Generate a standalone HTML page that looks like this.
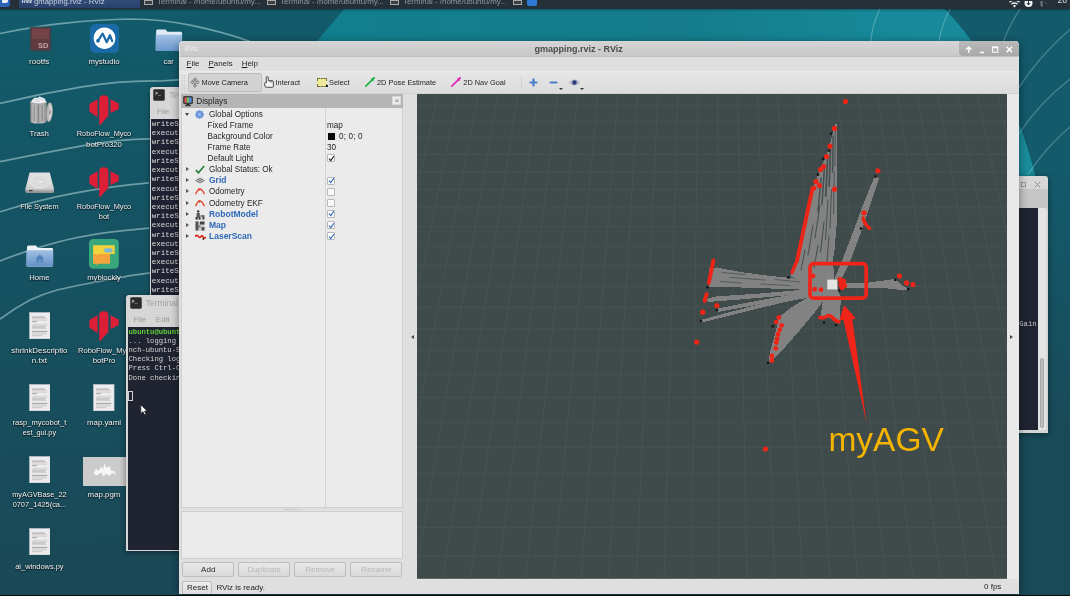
<!DOCTYPE html>
<html>
<head>
<meta charset="utf-8">
<title>gmapping.rviz - RViz</title>
<style>
*{box-sizing:border-box;margin:0;padding:0}
html,body{width:1070px;height:596px;overflow:hidden;background:#1a4856}
body{font-family:"Liberation Sans",sans-serif;position:relative;color:#222;filter:blur(.45px)}
.abs{position:absolute}
#bg{position:absolute;left:0;top:0;width:1070px;height:596px}
#panel{position:absolute;left:0;top:0;width:1070px;height:8.5px;background:#252f37;overflow:hidden;box-shadow:0 1px 2px rgba(0,0,0,.35)}
.tk{position:absolute;top:-2.8px;font-size:7.9px;line-height:9px;color:#8f979e;white-space:nowrap}
.ico{position:absolute;width:70px;text-align:center;font-size:8.2px;line-height:11px;color:#f1f3f4;text-shadow:0 1px 1px rgba(0,0,0,.75),0 0 2px rgba(0,0,0,.5)}
.ico svg{display:block;margin:0 auto}
/* rviz */
#rviz{position:absolute;left:179.3px;top:40.7px;width:839.8px;height:553.8px;background:#dfdfdf;border-radius:4px 4px 0 0;box-shadow:0 2px 10px rgba(0,0,0,.45);overflow:hidden}
#rtitle{position:absolute;left:0;top:0;width:100%;height:16.5px;background:linear-gradient(#d5d5d5,#c8c8c8);border-bottom:1px solid #bdbdbd}
#rtitle .t{position:absolute;left:354.6px;top:3.2px;white-space:nowrap;font-size:9px;line-height:11px;font-weight:bold;color:#4c4c4c}
#menu{position:absolute;left:0;top:16.5px;width:100%;height:13.5px;background:#dfdfdf;font-size:7.9px;color:#1e1e1e}
#menu span{position:absolute;top:1.6px}
#tool{position:absolute;left:0;top:30px;width:100%;height:23px;background:linear-gradient(#e6e6e6,#dcdcdc);border-top:1px solid #ebebeb;border-bottom:1px solid #d2d2d2;font-size:7.4px;color:#1e1e1e}
#tool .tb{position:absolute;top:6.4px;white-space:nowrap}
.row{position:absolute;left:0;height:11px;font-size:8.15px;line-height:11px;white-space:nowrap;color:#1f1f1f}
.row.b{font-weight:bold;color:#2f6ab8;font-size:8.5px}
.val{position:absolute;left:147px;font-size:8.15px;line-height:11px;height:11px;color:#1f1f1f}
.cb{position:absolute;left:147.2px;width:8px;height:8px;border:1px solid #b9b9b9;background:#fafafa;border-radius:1px}
.tri{position:absolute;left:6px;width:0;height:0;border-left:3px solid #555;border-top:2.5px solid transparent;border-bottom:2.5px solid transparent}
.btn{position:absolute;top:521px;height:15px;border:1px solid #bebebe;border-radius:2px;background:linear-gradient(#e9e9e9,#d9d9d9);font-size:8px;line-height:13px;text-align:center;color:#b5b5b5}
</style>
</head>
<body>
<!-- WALLPAPER -->
<svg id="bg" viewBox="0 0 1070 596">
<defs>
<linearGradient id="g0" x1="0" y1="0" x2="0.12" y2="1"><stop offset="0" stop-color="#115c6b"/><stop offset=".38" stop-color="#155363"/><stop offset="1" stop-color="#1a4856"/></linearGradient>
<linearGradient id="g1" x1="0" y1="0" x2="1" y2="0"><stop offset="0" stop-color="#127f8e"/><stop offset=".5" stop-color="#147c8c"/><stop offset=".8" stop-color="#17899a"/><stop offset="1" stop-color="#1a8d9d"/></linearGradient>
</defs>
<rect width="1070" height="596" fill="url(#g0)"/>
<path d="M352 0 L945 0 L945 9 Q985 50 1018.4 121.6 Q1029 148 1037 182 L1037 300 L1010 300 L1010 41 L317 41Z" fill="url(#g1)"/>
<path d="M945 0 L1070 0 L1070 596 L1010 596 L1010 300 L1037 300 L1037 182 Q1029 148 1018.4 121.6 Q985 50 945 9Z" fill="#135a6b"/>
<path d="M1010 300 L1070 250 L1070 596 L1010 596Z" fill="#16536a" opacity=".0"/>
<rect x="1010" y="420" width="60" height="176" fill="#194a58"/>
<linearGradient id="g2" x1="0" y1="0" x2="0" y2="1"><stop offset="0" stop-color="#135a6b"/><stop offset="1" stop-color="#194a58"/></linearGradient>
<rect x="1047" y="170" width="23" height="260" fill="url(#g2)"/>
<g fill="none" stroke="#c4e6e8" stroke-opacity=".5" stroke-width="1.7">
<path d="M0 33.5 Q35 26 68 22.8 Q100 19.4 130 19 Q165 19.5 190 25.2 Q220 31 250 41.5"/>
<path d="M0 103.3 Q40 94 80.5 87.2 T160 81 L182 79.6"/>
<path d="M0 161.6 Q40 153.5 80.5 146.1 T151 138.9"/>
<path d="M0 211.8 Q38 200 75.7 192.9 T149 182.8"/>
<path d="M0 261 Q30 249 63 240.8 T149 228.2"/>
<path d="M0 319 Q15 308 30 300 Q43 294 57 290 Q76 285.5 96.4 282 T130 275.7 L152 272.6"/>
</g>
<g fill="none" stroke="#bfe3e6" stroke-opacity=".33" stroke-width="1.2">
<path d="M1003.5 41 Q1010 24 1020 9"/>
<path d="M1018.4 88.4 Q1040 55 1070 29.5"/>
<path d="M1018.4 134.5 Q1040 102 1070 79.2"/>
<path d="M1027.6 175 Q1046 147 1070 127"/>
<path d="M939 41 Q942 24 950 9"/>
<path d="M871 41 Q872 25 880 9"/>
</g>
</svg>

<!-- TOP PANEL -->
<div id="panel">
 <div class="abs" style="left:-2px;top:-3px;width:12px;height:9.5px;background:#2a62b8;border-radius:3px"></div><div class="abs" style="left:2px;top:-1px;width:5.5px;height:4px;background:#eef2f8;border-radius:1px 2px 2px 1px"></div>
 <div class="abs" style="left:18.5px;top:0;width:121.5px;height:7.9px;background:linear-gradient(#314d79,#29406a)"></div>
 <div class="tk" style="left:34px;color:#c9d2dd;font-size:7.7px">gmapping.rviz - RViz</div><div class="abs" style="left:21.8px;top:-2.2px;font-size:5.4px;font-weight:bold;line-height:6px;color:#dfe5ee;letter-spacing:-.4px">RViz</div>
 <div class="tk" style="left:157px">Terminal - /home/ubuntu/my...</div>
 <div class="tk" style="left:280px">Terminal - /home/ubuntu/my...</div>
 <div class="tk" style="left:403px">Terminal - /home/ubuntu/my...</div>
 <div class="abs" style="left:144px;top:0;width:9px;height:5px;background:#3a3f44;border:1px solid #aaa"></div>
 <div class="abs" style="left:267px;top:0;width:9px;height:5px;background:#3a3f44;border:1px solid #aaa"></div>
 <div class="abs" style="left:390px;top:0;width:9px;height:5px;background:#3a3f44;border:1px solid #aaa"></div>
 <div class="abs" style="left:513px;top:0;width:9px;height:5px;background:#3a3f44;border:1px solid #aaa"></div><div class="abs" style="left:527px;top:0;width:10px;height:6px;background:#2d7bd6;border-radius:0 0 2px 2px"></div>
 <svg class="abs" style="left:1007.8px;top:.5px" width="44" height="9" viewBox="0 0 44 9"><g fill="none" stroke="#e8e8e8" stroke-width="1.3"><path d="M1.5 1.2Q6.5 -2.6 11.5 1.2"/><path d="M3.4 3.2Q6.5 .8 9.6 3.2"/></g><circle cx="6.5" cy="5" r="1.2" fill="#e8e8e8"/><circle cx="20.5" cy="2" r="4" fill="#f2f2f2"/><path d="M20.5 -.5V3.6M18.8 2L20.5 4 22.2 2" stroke="#1d2a33" stroke-width="1" fill="none"/><path d="M32.5 0V5L34.8 6V-1Z" fill="#69727a"/><path d="M37 1L39 3.5" stroke="#69727a" stroke-width=".8"/></svg>
<div class="tk" style="left:1057.6px;top:-3.9px;font-size:8.6px;color:#d8d8d8">28 S</div>
</div>

<!-- DESKTOP ICONS -->
<div id="icons"><svg class="abs" style="left:28.5px;top:25.5px" width="23" height="26" viewBox="0 0 23 26"><rect x=".5" y=".5" width="22" height="25" rx="1.8" fill="#2f4852" opacity=".85"/><rect x="1.8" y="1.8" width="19.4" height="22.4" rx="1" fill="#5f3b41"/><rect x="3" y="3" width="17" height="10" fill="#744349"/><text x="14.2" y="22.3" font-family="Liberation Sans,sans-serif" font-size="7.4" font-weight="bold" fill="#c4a3a8" text-anchor="middle">SD</text></svg>
<div class="ico" style="left:-5.799999999999997px;top:56.3px;width:90px;font-size:8.08px">rootfs</div>
<svg class="abs" style="left:89.5px;top:24px" width="29" height="29" viewBox="0 0 29 29"><rect width="29" height="29" rx="5" fill="#1a6aa8"/><circle cx="14.5" cy="14.2" r="10.8" fill="#fff"/><path d="M8.2 16.4L12.7 9.6 16.7 18.2 19.9 11.2 22.2 17.2" fill="none" stroke="#1a6aa8" stroke-width="2.2" stroke-linejoin="round" stroke-linecap="round"/><circle cx="8" cy="16.8" r="1.9" fill="#1a6aa8"/></svg>
<div class="ico" style="left:59px;top:56.3px;width:90px;font-size:7.75px">mystudio</div>
<svg class="abs" style="left:154.8px;top:28.6px" width="27.8" height="22.6" viewBox="0 0 29 24"><defs><linearGradient id="fo" x1="0" y1="0" x2="0" y2="1"><stop offset="0" stop-color="#a3c2e6"/><stop offset="1" stop-color="#6b98cd"/></linearGradient></defs><path d="M1 2Q1 .5 2.5 .5H11L13 3H27Q28.5 3 28.5 4.5V22Q28.5 23.5 27 23.5H2Q.5 23.5 .5 22Z" fill="#dfe9f5"/><path d="M.5 6H28.5V22Q28.5 23.5 27 23.5H2Q.5 23.5 .5 22Z" fill="url(#fo)"/></svg>
<div class="ico" style="left:123.6px;top:56.3px;width:90px;font-size:7.19px">car</div>
<svg class="abs" style="left:30px;top:96px" width="23" height="29" viewBox="0 0 23 29"><defs><linearGradient id="tr" x1="0" y1="0" x2="1" y2="0"><stop offset="0" stop-color="#8a8a8a"/><stop offset=".22" stop-color="#c6c6c6"/><stop offset=".5" stop-color="#a2a2a2"/><stop offset=".75" stop-color="#bcbcbc"/><stop offset="1" stop-color="#868686"/></linearGradient><linearGradient id="tl" x1="0" y1="0" x2="1" y2="0"><stop offset="0" stop-color="#a4a4a4"/><stop offset=".6" stop-color="#cdcdcd"/><stop offset="1" stop-color="#e2e2e2"/></linearGradient></defs><path d="M.3 5.8H16.7V25.2Q16.7 27.6 8.5 27.6 .3 27.6 .3 25.2Z" fill="url(#tr)"/><g fill="#7f7f7f" opacity=".75"><rect x="3.6" y="9" width="1.3" height="16.5"/><rect x="7.6" y="9.4" width="1.3" height="16.8"/><rect x="11.6" y="9" width="1.3" height="16.5"/></g><ellipse cx="8.5" cy="6" rx="8.3" ry="2.1" fill="#c9c9c9" stroke="#8f8f8f" stroke-width=".6"/><path d="M1.8 6L2.6 3.2 5 1.6 7.4 1.9 9.6 .5 12 1.6 14.4 2.2 15.6 4.4 15.2 6.2Q8.5 8.2 1.8 6Z" fill="#eef1f4"/><path d="M4 4.5L6 2.6 8 4.2 10 2 12 4 14 3M5 5.8L7.5 4.8 10 6" stroke="#b4bbc2" stroke-width=".6" fill="none"/><ellipse cx="19.3" cy="16.2" rx="3.1" ry="9.6" fill="url(#tl)" stroke="#969696" stroke-width=".6" transform="rotate(4 19.3 16.2)"/><ellipse cx="19.9" cy="16.2" rx="1" ry="2.2" fill="#9d9d9d" transform="rotate(4 19.3 16.2)"/></svg>
<div class="ico" style="left:-5.799999999999997px;top:128.2px;width:90px;font-size:7.72px">Trash</div>
<svg class="abs" style="left:89px;top:95px" width="30" height="31" viewBox="0 0 30 31"><path d="M.4 8.9L8.6 4.3V22.2L.4 16.6Z M10.2 4.4Q10.2 .2 14.8 .2 19.4.2 19.4 4.4V20.7L11.6 29.8Q10.2 30.6 10.2 28.6Z M21.5 4.3L29.7 8.4V14L21.5 18.1Z" fill="#dc1f36"/></svg>
<div class="ico" style="left:59px;top:128.2px;width:90px;font-size:7.30px">RoboFlow_Myco</div>
<div class="ico" style="left:59px;top:138.8px;width:90px;font-size:7.77px">botPro320</div>
<svg class="abs" style="left:25px;top:172.4px" width="29.4" height="21.4" viewBox="0 0 29.4 21.4"><defs><linearGradient id="hd" x1="0" y1="0" x2="0" y2="1"><stop offset="0" stop-color="#e2e2e2"/><stop offset="1" stop-color="#d0d0d0"/></linearGradient><linearGradient id="hf2" x1="0" y1="0" x2="0" y2="1"><stop offset="0" stop-color="#bdbdbd"/><stop offset="1" stop-color="#8f8f8f"/></linearGradient></defs><path d="M4.6 .5H24.8L29 16.8H.4Z" fill="url(#hd)"/><path d="M.4 16.8H29V19.6Q29 20.9 27.6 20.9H1.8Q.4 20.9 .4 19.6Z" fill="url(#hf2)"/><ellipse cx="15" cy="9.6" rx="10" ry="6.4" fill="#dcdcdc" stroke="#e9e9e9" stroke-width=".9"/><ellipse cx="15.4" cy="9.8" rx="3.6" ry="2.2" fill="#e6e6e6" stroke="#cacaca" stroke-width=".6"/><rect x="4" y="18" width="3.6" height="1.2" fill="#3f3f3f"/><path d="M.6 16.8H28.8" stroke="#ececec" stroke-width=".7"/></svg>
<div class="ico" style="left:-5.600000000000001px;top:200.8px;width:90px;font-size:7.32px">File System</div>
<svg class="abs" style="left:89px;top:167px" width="30" height="31" viewBox="0 0 30 31"><path d="M.4 8.9L8.6 4.3V22.2L.4 16.6Z M10.2 4.4Q10.2 .2 14.8 .2 19.4.2 19.4 4.4V20.7L11.6 29.8Q10.2 30.6 10.2 28.6Z M21.5 4.3L29.7 8.4V14L21.5 18.1Z" fill="#dc1f36"/></svg>
<div class="ico" style="left:59px;top:200.8px;width:90px;font-size:7.30px">RoboFlow_Myco</div>
<div class="ico" style="left:59px;top:211.4px;width:90px;font-size:7.41px">bot</div>
<svg class="abs" style="left:26px;top:244.6px" width="27.6" height="22.2" viewBox="0 0 27.6 22.2"><defs><linearGradient id="hf" x1="0" y1="0" x2="0" y2="1"><stop offset="0" stop-color="#a2c0e4"/><stop offset="1" stop-color="#6290c6"/></linearGradient></defs><path d="M1 2Q1 .5 2.5 .5H10L12 3H26Q27.1 3 27.1 4.5V20.4Q27.1 21.8 25.6 21.8H2Q.5 21.8 .5 20.4Z" fill="#eef2f7"/><path d="M.5 5.2H27.1V20.4Q27.1 21.8 25.6 21.8H2Q.5 21.8 .5 20.4Z" fill="url(#hf)"/><path d="M13.8 9.6L9.3 13.6H10.8V18H12.8V15H14.8V18H16.8V13.6H18.3Z" fill="#5283bd"/></svg>
<div class="ico" style="left:-5.600000000000001px;top:272.4px;width:90px;font-size:7.64px">Home</div>
<svg class="abs" style="left:89.4px;top:239.1px" width="29.8" height="29.8" viewBox="0 0 29.8 29.8"><rect width="29.8" height="29.8" rx="4.2" fill="#3aa67c"/><path d="M4.1 14.9H21.1V24.7H9.2L7.8 26 6.6 24.7H4.1Z" fill="#f5a43b"/><path d="M4.1 6.2H25.7V14.9H9.2L7.8 16.2 6.6 14.9H4.1Z" fill="#f3d33b"/><rect x="14.9" y="9.2" width="8.7" height="4.2" rx="2.1" fill="#7bb8d6"/></svg>
<div class="ico" style="left:59px;top:272.4px;width:90px;font-size:7.65px">myblockly</div>
<svg class="abs" style="left:28.7px;top:311.5px" width="21.6" height="27.4" viewBox="0 0 22 28"><rect x=".5" y=".5" width="21" height="27" fill="#ececee" stroke="#cfcfd2" stroke-width=".5"/><path d="M3.2 5.2H16.5" stroke="#8d8d8d" stroke-width=".8"/><path d="M3.2 6.8H18.5" stroke="#c9c9c9" stroke-width=".8"/><path d="M3.2 8.3H18.5" stroke="#c4c4c4" stroke-width=".8"/><path d="M3.2 9.9H8" stroke="#8a8a8a" stroke-width=".8"/><path d="M3.2 12.4H18.5" stroke="#cdcdcd" stroke-width=".8"/><path d="M3.2 13.9H18.5" stroke="#c4c4c4" stroke-width=".8"/><path d="M3.2 15.4H17" stroke="#999" stroke-width=".8"/><path d="M3.2 16.9H18" stroke="#c6c6c6" stroke-width=".8"/><path d="M3.2 19.8H18.8" stroke="#8f8f8f" stroke-width=".8"/><path d="M3.2 21.3H18" stroke="#c2c2c2" stroke-width=".8"/><path d="M3.2 22.8H17.5" stroke="#c6c6c6" stroke-width=".8"/><path d="M3.2 24.2H13.5" stroke="#bcbcbc" stroke-width=".8"/></svg>
<div class="ico" style="left:-5.600000000000001px;top:344.5px;width:90px;font-size:7.92px">shrinkDescriptio</div>
<div class="ico" style="left:-5.600000000000001px;top:355.1px;width:90px;font-size:7.99px">n.txt</div>
<svg class="abs" style="left:89px;top:310.5px" width="30" height="31" viewBox="0 0 30 31"><path d="M.4 8.9L8.6 4.3V22.2L.4 16.6Z M10.2 4.4Q10.2 .2 14.8 .2 19.4.2 19.4 4.4V20.7L11.6 29.8Q10.2 30.6 10.2 28.6Z M21.5 4.3L29.7 8.4V14L21.5 18.1Z" fill="#dc1f36"/></svg>
<div class="ico" style="left:59px;top:344.5px;width:90px;font-size:7.56px">RoboFlow_Myc</div>
<div class="ico" style="left:59px;top:355.1px;width:90px;font-size:7.72px">botPro</div>
<svg class="abs" style="left:28.7px;top:384px" width="21.6" height="27.4" viewBox="0 0 22 28"><rect x=".5" y=".5" width="21" height="27" fill="#ececee" stroke="#cfcfd2" stroke-width=".5"/><path d="M3.2 5.2H16.5" stroke="#8d8d8d" stroke-width=".8"/><path d="M3.2 6.8H18.5" stroke="#c9c9c9" stroke-width=".8"/><path d="M3.2 8.3H18.5" stroke="#c4c4c4" stroke-width=".8"/><path d="M3.2 9.9H8" stroke="#8a8a8a" stroke-width=".8"/><path d="M3.2 12.4H18.5" stroke="#cdcdcd" stroke-width=".8"/><path d="M3.2 13.9H18.5" stroke="#c4c4c4" stroke-width=".8"/><path d="M3.2 15.4H17" stroke="#999" stroke-width=".8"/><path d="M3.2 16.9H18" stroke="#c6c6c6" stroke-width=".8"/><path d="M3.2 19.8H18.8" stroke="#8f8f8f" stroke-width=".8"/><path d="M3.2 21.3H18" stroke="#c2c2c2" stroke-width=".8"/><path d="M3.2 22.8H17.5" stroke="#c6c6c6" stroke-width=".8"/><path d="M3.2 24.2H13.5" stroke="#bcbcbc" stroke-width=".8"/></svg>
<div class="ico" style="left:-5.600000000000001px;top:416.7px;width:90px;font-size:7.55px">rasp_mycobot_t</div>
<div class="ico" style="left:-5.600000000000001px;top:427.3px;width:90px;font-size:7.32px">est_gui.py</div>
<svg class="abs" style="left:93.2px;top:384px" width="21.6" height="27.4" viewBox="0 0 22 28"><rect x=".5" y=".5" width="21" height="27" fill="#ececee" stroke="#cfcfd2" stroke-width=".5"/><path d="M3.2 5.2H16.5" stroke="#8d8d8d" stroke-width=".8"/><path d="M3.2 6.8H18.5" stroke="#c9c9c9" stroke-width=".8"/><path d="M3.2 8.3H18.5" stroke="#c4c4c4" stroke-width=".8"/><path d="M3.2 9.9H8" stroke="#8a8a8a" stroke-width=".8"/><path d="M3.2 12.4H18.5" stroke="#cdcdcd" stroke-width=".8"/><path d="M3.2 13.9H18.5" stroke="#c4c4c4" stroke-width=".8"/><path d="M3.2 15.4H17" stroke="#999" stroke-width=".8"/><path d="M3.2 16.9H18" stroke="#c6c6c6" stroke-width=".8"/><path d="M3.2 19.8H18.8" stroke="#8f8f8f" stroke-width=".8"/><path d="M3.2 21.3H18" stroke="#c2c2c2" stroke-width=".8"/><path d="M3.2 22.8H17.5" stroke="#c6c6c6" stroke-width=".8"/><path d="M3.2 24.2H13.5" stroke="#bcbcbc" stroke-width=".8"/></svg>
<div class="ico" style="left:59px;top:416.7px;width:90px;font-size:7.85px">map.yaml</div>
<svg class="abs" style="left:28.7px;top:456px" width="21.6" height="27.4" viewBox="0 0 22 28"><rect x=".5" y=".5" width="21" height="27" fill="#ececee" stroke="#cfcfd2" stroke-width=".5"/><path d="M3.2 5.2H16.5" stroke="#8d8d8d" stroke-width=".8"/><path d="M3.2 6.8H18.5" stroke="#c9c9c9" stroke-width=".8"/><path d="M3.2 8.3H18.5" stroke="#c4c4c4" stroke-width=".8"/><path d="M3.2 9.9H8" stroke="#8a8a8a" stroke-width=".8"/><path d="M3.2 12.4H18.5" stroke="#cdcdcd" stroke-width=".8"/><path d="M3.2 13.9H18.5" stroke="#c4c4c4" stroke-width=".8"/><path d="M3.2 15.4H17" stroke="#999" stroke-width=".8"/><path d="M3.2 16.9H18" stroke="#c6c6c6" stroke-width=".8"/><path d="M3.2 19.8H18.8" stroke="#8f8f8f" stroke-width=".8"/><path d="M3.2 21.3H18" stroke="#c2c2c2" stroke-width=".8"/><path d="M3.2 22.8H17.5" stroke="#c6c6c6" stroke-width=".8"/><path d="M3.2 24.2H13.5" stroke="#bcbcbc" stroke-width=".8"/></svg>
<div class="ico" style="left:-5.600000000000001px;top:488.8px;width:90px;font-size:7.37px">myAGVBase_22</div>
<div class="ico" style="left:-5.600000000000001px;top:499.4px;width:90px;font-size:7.42px">0707_1425(ca...</div>
<svg class="abs" style="left:83px;top:456.5px" width="45" height="29" viewBox="0 0 45 29"><rect width="45" height="29" fill="#cbcbcb"/><path d="M10.5 16.5L13 12 16 13.5 18 9.5 20 12 21.5 6.5 23.5 11 27 9 27.5 13 31.5 14.5 33 17.5 29 16 26.5 19 23 16.5 20.5 19.5 18 15.5 14 18.5Z" fill="#f6f6f6"/></svg>
<div class="ico" style="left:59px;top:488.8px;width:90px;font-size:7.86px">map.pgm</div>
<svg class="abs" style="left:28.7px;top:528px" width="21.6" height="27.4" viewBox="0 0 22 28"><rect x=".5" y=".5" width="21" height="27" fill="#ececee" stroke="#cfcfd2" stroke-width=".5"/><path d="M3.2 5.2H16.5" stroke="#8d8d8d" stroke-width=".8"/><path d="M3.2 6.8H18.5" stroke="#c9c9c9" stroke-width=".8"/><path d="M3.2 8.3H18.5" stroke="#c4c4c4" stroke-width=".8"/><path d="M3.2 9.9H8" stroke="#8a8a8a" stroke-width=".8"/><path d="M3.2 12.4H18.5" stroke="#cdcdcd" stroke-width=".8"/><path d="M3.2 13.9H18.5" stroke="#c4c4c4" stroke-width=".8"/><path d="M3.2 15.4H17" stroke="#999" stroke-width=".8"/><path d="M3.2 16.9H18" stroke="#c6c6c6" stroke-width=".8"/><path d="M3.2 19.8H18.8" stroke="#8f8f8f" stroke-width=".8"/><path d="M3.2 21.3H18" stroke="#c2c2c2" stroke-width=".8"/><path d="M3.2 22.8H17.5" stroke="#c6c6c6" stroke-width=".8"/><path d="M3.2 24.2H13.5" stroke="#bcbcbc" stroke-width=".8"/></svg>
<div class="ico" style="left:-5.600000000000001px;top:560.7px;width:90px;font-size:7.45px">ai_windows.py</div></div>

<!-- TERMINALS -->
<div id="terms"><div class="abs" style="left:149.5px;top:86.5px;width:60px;height:215px;background:#d6d6d6;border-radius:3px 0 0 0;box-shadow:0 1px 5px rgba(0,0,0,.4)"></div>
<div class="abs" style="left:153px;top:89px;width:12px;height:12px;background:#2b2b2b;border:1px solid #555;border-radius:1.5px"></div><div class="abs" style="left:155px;top:91px;font:bold 5px/6px 'Liberation Mono',monospace;color:#eee">&gt;_</div>
<div class="abs" style="left:169.3px;top:89.5px;font-size:8.6px;line-height:11px;color:#a3a3a3">Ter</div>
<div class="abs" style="left:157px;top:105.6px;font-size:7.5px;line-height:11px;color:#9a9a9a">File</div>
<div class="abs" style="left:150.5px;top:119px;width:40px;height:180px;background:#1f2331;overflow:hidden"></div>
<div class="abs" style="left:151.7px;top:120.00px;font:7.5px/9px 'Liberation Mono',monospace;color:#dcdcdc;white-space:pre">writeSp</div>
<div class="abs" style="left:151.7px;top:129.22px;font:7.5px/9px 'Liberation Mono',monospace;color:#dcdcdc;white-space:pre">execute</div>
<div class="abs" style="left:151.7px;top:138.43px;font:7.5px/9px 'Liberation Mono',monospace;color:#dcdcdc;white-space:pre">writeSp</div>
<div class="abs" style="left:151.7px;top:147.65px;font:7.5px/9px 'Liberation Mono',monospace;color:#dcdcdc;white-space:pre">execute</div>
<div class="abs" style="left:151.7px;top:156.87px;font:7.5px/9px 'Liberation Mono',monospace;color:#dcdcdc;white-space:pre">writeSp</div>
<div class="abs" style="left:151.7px;top:166.09px;font:7.5px/9px 'Liberation Mono',monospace;color:#dcdcdc;white-space:pre">execute</div>
<div class="abs" style="left:151.7px;top:175.30px;font:7.5px/9px 'Liberation Mono',monospace;color:#dcdcdc;white-space:pre">writeSp</div>
<div class="abs" style="left:151.7px;top:184.52px;font:7.5px/9px 'Liberation Mono',monospace;color:#dcdcdc;white-space:pre">execute</div>
<div class="abs" style="left:151.7px;top:193.74px;font:7.5px/9px 'Liberation Mono',monospace;color:#dcdcdc;white-space:pre">writeSp</div>
<div class="abs" style="left:151.7px;top:202.95px;font:7.5px/9px 'Liberation Mono',monospace;color:#dcdcdc;white-space:pre">execute</div>
<div class="abs" style="left:151.7px;top:212.17px;font:7.5px/9px 'Liberation Mono',monospace;color:#dcdcdc;white-space:pre">writeSp</div>
<div class="abs" style="left:151.7px;top:221.39px;font:7.5px/9px 'Liberation Mono',monospace;color:#dcdcdc;white-space:pre">execute</div>
<div class="abs" style="left:151.7px;top:230.60px;font:7.5px/9px 'Liberation Mono',monospace;color:#dcdcdc;white-space:pre">writeSp</div>
<div class="abs" style="left:151.7px;top:239.82px;font:7.5px/9px 'Liberation Mono',monospace;color:#dcdcdc;white-space:pre">execute</div>
<div class="abs" style="left:151.7px;top:249.04px;font:7.5px/9px 'Liberation Mono',monospace;color:#dcdcdc;white-space:pre">writeSp</div>
<div class="abs" style="left:151.7px;top:258.25px;font:7.5px/9px 'Liberation Mono',monospace;color:#dcdcdc;white-space:pre">execute</div>
<div class="abs" style="left:151.7px;top:267.47px;font:7.5px/9px 'Liberation Mono',monospace;color:#dcdcdc;white-space:pre">writeSp</div>
<div class="abs" style="left:151.7px;top:276.69px;font:7.5px/9px 'Liberation Mono',monospace;color:#dcdcdc;white-space:pre">execute</div>
<div class="abs" style="left:151.7px;top:285.91px;font:7.5px/9px 'Liberation Mono',monospace;color:#dcdcdc;white-space:pre">writeSp</div>
<div class="abs" style="left:125.7px;top:294.5px;width:70px;height:256.5px;background:#d6d6d6;border-radius:3px 0 0 0;box-shadow:0 1px 6px rgba(0,0,0,.45)"></div>
<div class="abs" style="left:129.5px;top:297px;width:12px;height:12px;background:#2b2b2b;border:1px solid #555;border-radius:1.5px"></div><div class="abs" style="left:131.5px;top:299px;font:bold 5px/6px 'Liberation Mono',monospace;color:#eee">&gt;_</div>
<div class="abs" style="left:145.5px;top:297.5px;font-size:8.6px;line-height:11px;color:#a3a3a3">Terminal</div>
<div class="abs" style="left:133.4px;top:313.5px;font-size:8px;line-height:11px;color:#9a9a9a">File</div><div class="abs" style="left:155.8px;top:313.5px;font-size:8px;line-height:11px;color:#9a9a9a">Edit</div>
<div class="abs" style="left:127.5px;top:326.5px;width:60px;height:223px;background:#1f2430"></div>
<div class="abs" style="left:128.5px;top:327.60px;font:bold 7.2px/9px 'Liberation Mono',monospace;color:#5fd23c;white-space:pre">ubuntu@ubuntu</div>
<div class="abs" style="left:128.5px;top:337.00px;font:7.2px/9px 'Liberation Mono',monospace;color:#d6d6d6;white-space:pre">... logging t</div>
<div class="abs" style="left:128.5px;top:346.00px;font:7.2px/9px 'Liberation Mono',monospace;color:#d6d6d6;white-space:pre">nch-ubuntu-51</div>
<div class="abs" style="left:128.5px;top:355.30px;font:7.2px/9px 'Liberation Mono',monospace;color:#d6d6d6;white-space:pre">Checking log </div>
<div class="abs" style="left:128.5px;top:364.40px;font:7.2px/9px 'Liberation Mono',monospace;color:#d6d6d6;white-space:pre">Press Ctrl-C </div>
<div class="abs" style="left:128.5px;top:373.50px;font:7.2px/9px 'Liberation Mono',monospace;color:#d6d6d6;white-space:pre">Done checking</div>
<div class="abs" style="left:128.3px;top:391px;width:4.4px;height:9.6px;border:1px solid #cfcfcf"></div>
<svg class="abs" style="left:140px;top:404px" width="8" height="12" viewBox="0 0 8 12"><path d="M.8 .8V9.6L3 7.6 4.6 11 6 10.3 4.5 7.1H7.2Z" fill="#fff" stroke="#222" stroke-width=".7"/></svg>
<div class="abs" style="left:1010px;top:175.5px;width:37.5px;height:257px;background:#d6d6d6;border-radius:0 3px 0 0;box-shadow:0 1px 6px rgba(0,0,0,.45)"></div>
<div class="abs" style="left:1010px;top:188.5px;width:37.5px;height:20px;background:#c6c6c6"></div>
<div class="abs" style="left:1010px;top:208px;width:27.5px;height:222px;background:#1f2430"></div>
<div class="abs" style="left:1019.3px;top:320px;font:7.2px/9.2px 'Liberation Mono',monospace;color:#c9c9c9">Gain</div>
<div class="abs" style="left:1021.2px;top:181.6px;width:5px;height:5px;border:1px solid #9a9a9a"></div>
<svg class="abs" style="left:1033.5px;top:180.8px" width="7" height="7" viewBox="0 0 7 7"><path d="M.8 .8L6.2 6.2M6.2 .8L.8 6.2" stroke="#8f8f8f" stroke-width="1"/></svg>
<div class="abs" style="left:1038px;top:208px;width:8px;height:222px;background:#e4e4e4"></div><div class="abs" style="left:1039.8px;top:358px;width:4.4px;height:70px;background:#bdbdbd;border:1px solid #a8a8a8;border-radius:2px"></div></div>

<!-- RVIZ -->
<div id="rviz"><div class="abs" style="left:.7px;top:.3px;width:838.5px;height:553px">
 <div id="rtitle"><div class="t">gmapping.rviz - RViz</div>
<div class="abs" style="left:4.5px;top:4px;font-size:7px;font-weight:bold;color:#e6e6e6;letter-spacing:-.5px">RViz</div>
<div class="abs" style="left:779.5px;top:0;width:60px;height:15.5px;background:linear-gradient(#b9b9b9,#a9a9a9);border-radius:0 4px 0 4px"></div>
<svg class="abs" style="left:784px;top:4px" width="50" height="10" viewBox="0 0 50 10"><g stroke="#fff" fill="none" stroke-width="1.4"><path d="M4.8 8V2.2M2.2 4.6L4.8 2 7.4 4.6" stroke-linejoin="round"/><path d="M16 7.4H20.2" stroke-width="1.5"/><rect x="28.6" y="2" width="5.2" height="5.2" stroke-width="1"/><path d="M28.6 2.5H33.8" stroke-width="1.6"/><path d="M42.6 1.8L48 7.2M48 1.8L42.6 7.2" stroke-width="1.5"/></g></svg>
</div>
 <div id="menu"><span style="left:6.6px"><u>F</u>ile</span><span style="left:28.5px"><u>P</u>anels</span><span style="left:61.7px"><u>H</u>elp</span></div>
 <div id="tool"><div class="abs" style="left:2px;top:3px;width:3px;height:16px;border-left:1px dotted #cbcbcb;border-right:1px dotted #cbcbcb"></div>
<div class="abs" style="left:8px;top:1px;width:74px;height:19px;background:#d3d3d3;border:1px solid #bcbcbc;border-radius:2px"></div>
<svg class="abs" style="left:10px;top:5px" width="10" height="11" viewBox="0 0 10 11"><g fill="none" stroke="#6d6d6d" stroke-width=".8"><path d="M5 .6L6.6 2.4H5.6V4.4H7.6V3.4L9.4 5.2 7.6 7V6H5.6V8.6H6.6L5 10.4 3.4 8.6H4.4V6H2.4V7L.6 5.2 2.4 3.4V4.4H4.4V2.4H3.4Z"/></g></svg>
<div class="tb" style="left:21.5px">Move Camera</div>
<svg class="abs" style="left:84px;top:4px" width="10" height="12" viewBox="0 0 10 12"><path d="M2.3 7V1.5Q2.3.6 3.3.6 4.3.6 4.3 1.5V4.7H8.2Q9.4 4.7 9.4 5.9V10Q9.4 11.3 8.2 11.3H2.4Q1.2 11.3 1 10.2L.6 7.6Q.6 6.6 1.4 6.6Z" fill="#f4f4f4" stroke="#3a3a3a" stroke-width=".9" stroke-linejoin="round"/><path d="M6 4.9V6.6M7.7 4.9V6.6" stroke="#3a3a3a" stroke-width=".6"/></svg>
<div class="tb" style="left:95.5px">Interact</div>
<div class="abs" style="left:137px;top:6px;width:10.5px;height:9px;background:#eeea9a;border:1px dashed #77733a"></div><div class="abs" style="left:146px;top:13.5px;width:2px;height:2px;background:#222"></div>
<div class="tb" style="left:149px">Select</div>
<svg class="abs" style="left:185px;top:5px" width="10" height="10" viewBox="0 0 10 10"><path d="M.8 9.2L9.2.8" stroke="#24b14a" stroke-width="1.7" stroke-linecap="round"/><path d="M9.6.4L5.6 1.8 8.2 4.4Z" fill="#24b14a"/></svg>
<div class="tb" style="left:197px">2D Pose Estimate</div>
<svg class="abs" style="left:271.5px;top:5px" width="10" height="10" viewBox="0 0 10 10"><path d="M.8 9.2L9.2.8" stroke="#e326b8" stroke-width="1.7" stroke-linecap="round"/><path d="M9.6.4L5.6 1.8 8.2 4.4Z" fill="#e326b8"/></svg>
<div class="tb" style="left:283.3px">2D Nav Goal</div>
<div class="abs" style="left:341px;top:4px;width:1px;height:14px;background:#d0d0d0"></div>
<svg class="abs" style="left:348.8px;top:6px" width="9" height="9" viewBox="0 0 9 9"><path d="M4.5 1.4V7.6M1.4 4.5H7.6" stroke="#4a7fc9" stroke-width="2.2" stroke-linecap="round"/></svg>
<svg class="abs" style="left:369px;top:6px" width="9" height="9" viewBox="0 0 9 9"><path d="M1.5 4.5H7.5" stroke="#4a7fc9" stroke-width="2.2" stroke-linecap="round"/></svg>
<div class="abs" style="left:379.5px;top:16px;border-top:2.2px solid #333;border-left:2px solid transparent;border-right:2px solid transparent"></div>
<svg class="abs" style="left:389.5px;top:6px" width="11" height="9" viewBox="0 0 11 9"><path d="M.6 4.5Q5.5-.6 10.4 4.5 5.5 9.6 .6 4.5Z" fill="#c9cfe0" stroke="#8f98b5" stroke-width=".7"/><circle cx="5.5" cy="4.5" r="2.3" fill="#2d3f7a"/></svg>
<div class="abs" style="left:400px;top:16px;border-top:2.2px solid #333;border-left:2px solid transparent;border-right:2px solid transparent"></div></div>
 <div id="disp"><div class="abs" style="left:1px;top:53.3px;width:222px;height:14px;background:#b5b5b5"></div>
<svg class="abs" style="left:3px;top:55px" width="10" height="11" viewBox="0 0 10 11"><rect x=".5" y=".5" width="9" height="7.2" rx=".8" fill="#333" stroke="#222" stroke-width=".6"/><rect x="1.4" y="1.4" width="2.4" height="5.4" fill="#d9534f"/><rect x="3.8" y="1.4" width="2.4" height="5.4" fill="#6cc071"/><rect x="6.2" y="1.4" width="2.4" height="5.4" fill="#5b8fd6"/><rect x="3.4" y="8" width="3.2" height="1.2" fill="#222"/><rect x="2.2" y="9.2" width="5.6" height="1" fill="#222"/></svg>
<div class="abs" style="left:16.3px;top:55px;font-size:8.2px;line-height:11px;color:#1e1e1e">Displays</div>
<div class="abs" style="left:212px;top:55px;width:9.5px;height:9.5px;background:#ececec;border:1px solid #d8d8d8;font-size:8px;line-height:7.5px;text-align:center;color:#777">×</div>
<div class="abs" style="left:1px;top:67.3px;width:222px;height:400.2px;background:#ebebeb;border:1px solid #cfcfcf;border-top:none"></div>
<div class="abs" style="left:144.8px;top:67.3px;width:1px;height:400.2px;background:#d3d3d3"></div>
<div class="row" style="left:29px;top:68.0px">Global Options</div>
<div class="abs" style="left:5px;top:72.2px;border-top:3px solid #444;border-left:2.6px solid transparent;border-right:2.6px solid transparent"></div>
<svg class="abs" style="left:15.5px;top:69.0px" width="9" height="9" viewBox="0 0 9 9"><circle cx="4.5" cy="4.5" r="3.6" fill="#6f9adf" stroke="#4f7fcf" stroke-width="1.2" stroke-dasharray="1.4 .9"/><circle cx="4.5" cy="4.5" r="1.2" fill="#a9c4ee"/></svg>
<div class="row" style="left:27.6px;top:79.0px">Fixed Frame</div>
<div class="val" style="top:79.0px">map</div>
<div class="row" style="left:27.6px;top:90.1px">Background Color</div>
<div class="abs" style="left:148.5px;top:92.1px;width:7px;height:7px;background:#0a0a0a"></div><div class="val" style="left:159px;top:90.1px;letter-spacing:.15px">0; 0; 0</div>
<div class="row" style="left:27.6px;top:101.2px">Frame Rate</div>
<div class="val" style="top:101.2px">30</div>
<div class="row" style="left:27.6px;top:112.3px">Default Light</div>
<div class="cb" style="top:113.4px"></div>
<svg class="abs" style="left:148.2px;top:114.1px" width="7" height="7" viewBox="0 0 7 7"><path d="M1 3.6L2.8 5.6 6 1" fill="none" stroke="#222" stroke-width="1.1"/></svg>
<div class="row" style="left:29px;top:123.4px">Global Status: Ok</div>
<div class="tri" style="top:126.4px"></div>
<svg class="abs" style="left:15.5px;top:124.4px" width="10" height="9" viewBox="0 0 10 9"><path d="M.8 5L3.4 7.8 9.2 .9" fill="none" stroke="#1d7a2e" stroke-width="1.5"/></svg>
<div class="row b" style="left:29px;top:134.5px">Grid</div>
<div class="tri" style="top:137.5px"></div>
<svg class="abs" style="left:15.5px;top:135.5px" width="10" height="9" viewBox="0 0 10 9"><path d="M.6 4.5L5 2 9.4 4.5 5 7Z M2.8 3.25L7.2 5.75M7.2 3.25L2.8 5.75" fill="#d8d8d8" stroke="#555" stroke-width=".7"/></svg>
<div class="cb" style="top:135.6px"></div>
<svg class="abs" style="left:148.2px;top:136.3px" width="7" height="7" viewBox="0 0 7 7"><path d="M1 3.6L2.8 5.6 6 1" fill="none" stroke="#2f6ab8" stroke-width="1.1"/></svg>
<div class="row" style="left:29px;top:145.5px">Odometry</div>
<div class="tri" style="top:148.5px"></div>
<svg class="abs" style="left:15.5px;top:146.5px" width="10" height="9" viewBox="0 0 10 9"><path d="M.6 7.2Q2.5 2 5 2 7.5 2.4 9.4 7.2" fill="none" stroke="#e0452c" stroke-width="1.3"/><path d="M3.4 1L6.2 2.2 4 4Z" fill="#e0452c"/></svg>
<div class="cb" style="top:146.6px"></div>
<div class="row" style="left:29px;top:156.6px">Odometry EKF</div>
<div class="tri" style="top:159.6px"></div>
<svg class="abs" style="left:15.5px;top:157.6px" width="10" height="9" viewBox="0 0 10 9"><path d="M.6 7.2Q2.5 2 5 2 7.5 2.4 9.4 7.2" fill="none" stroke="#e0452c" stroke-width="1.3"/><path d="M3.4 1L6.2 2.2 4 4Z" fill="#e0452c"/></svg>
<div class="cb" style="top:157.7px"></div>
<div class="row b" style="left:29px;top:167.7px">RobotModel</div>
<div class="tri" style="top:170.7px"></div>
<svg class="abs" style="left:15.5px;top:168.7px" width="10" height="10" viewBox="0 0 10 10"><circle cx="3.2" cy="1.4" r="1.2" fill="#333"/><rect x="1.6" y="3" width="3.2" height="4.4" fill="#555"/><rect x=".6" y="7" width="2" height="2.6" fill="#333"/><rect x="3.6" y="7" width="2" height="2.6" fill="#333"/><rect x="5.6" y="5" width="3.8" height="2" fill="#777"/><rect x="7.4" y="6.6" width="2" height="3" fill="#444"/></svg>
<div class="cb" style="top:168.8px"></div>
<svg class="abs" style="left:148.2px;top:169.5px" width="7" height="7" viewBox="0 0 7 7"><path d="M1 3.6L2.8 5.6 6 1" fill="none" stroke="#2f6ab8" stroke-width="1.1"/></svg>
<div class="row b" style="left:29px;top:178.8px">Map</div>
<div class="tri" style="top:181.8px"></div>
<svg class="abs" style="left:15.5px;top:179.8px" width="10" height="10" viewBox="0 0 10 10"><rect x=".5" y=".5" width="9" height="9" fill="#cfcfcf"/><rect x=".5" y=".5" width="3" height="9" fill="#555"/><rect x="5" y=".5" width="4.5" height="3" fill="#444"/><rect x="6.5" y="6" width="3" height="3.5" fill="#555"/><rect x="3.5" y="4.5" width="2" height="2" fill="#777"/></svg>
<div class="cb" style="top:179.9px"></div>
<svg class="abs" style="left:148.2px;top:180.6px" width="7" height="7" viewBox="0 0 7 7"><path d="M1 3.6L2.8 5.6 6 1" fill="none" stroke="#2f6ab8" stroke-width="1.1"/></svg>
<div class="row b" style="left:29px;top:189.9px">LaserScan</div>
<div class="tri" style="top:192.9px"></div>
<svg class="abs" style="left:15.5px;top:190.9px" width="11" height="9" viewBox="0 0 11 9"><path d="M.6 4.2Q2 2.4 3.4 4.4 4.6 6.4 5.8 4.6 7 2.8 8.2 5 9 6.6 10.4 5.6" fill="none" stroke="#e0261a" stroke-width="1.7" stroke-linecap="round"/><rect x="7.6" y="6.2" width="1.6" height="1.6" fill="#222"/></svg>
<div class="cb" style="top:191.0px"></div>
<svg class="abs" style="left:148.2px;top:191.7px" width="7" height="7" viewBox="0 0 7 7"><path d="M1 3.6L2.8 5.6 6 1" fill="none" stroke="#2f6ab8" stroke-width="1.1"/></svg>
<div class="abs" style="left:.6px;top:470px;width:222.6px;height:48.5px;background:#ebebeb;border:1px solid #cfcfcf"></div>
<div class="abs" style="left:104px;top:467.6px;width:14px;height:1px;border-top:1px dotted #bbb"></div>
<div class="btn" style="left:2.5px;width:51.5px;color:#2a2a2a">Add</div>
<div class="btn" style="left:58.5px;width:51.5px;color:#b7b7b7">Duplicate</div>
<div class="btn" style="left:114.5px;width:51.5px;color:#b7b7b7">Remove</div>
<div class="btn" style="left:170.5px;width:51.5px;color:#b7b7b7">Rename</div>
<div class="abs" style="left:2.5px;top:540px;width:30px;height:14px;border:1px solid #bebebe;border-radius:2px;background:linear-gradient(#ececec,#dedede);font-size:8px;line-height:12.5px;text-align:center;color:#222">Reset</div>
<div class="abs" style="left:36.5px;top:541px;font-size:8px;line-height:11px;color:#222">RViz is ready.</div>
<div class="abs" style="left:804px;top:540px;font-size:8px;line-height:11px;color:#222">0 fps</div>
<div class="abs" style="left:827.2px;top:53px;width:12px;height:484.8px;background:#e9e9e9"></div>
<div class="abs" style="left:231px;top:293.6px;border-right:3px solid #444;border-top:2.6px solid transparent;border-bottom:2.6px solid transparent"></div>
<div class="abs" style="left:830.5px;top:293.6px;border-left:3px solid #444;border-top:2.6px solid transparent;border-bottom:2.6px solid transparent"></div></div>
 <div id="view"><svg id="v3d" class="abs" style="left:237px;top:53px" width="590.2" height="484.79999999999995" viewBox="417 94 590.2 484.79999999999995">
<rect x="417" y="94" width="590.2" height="484.79999999999995" fill="#3f4b4a"/>
<path d="M417 556.4H1007.2M417 527.7H1007.2M417 500.0H1007.2M417 473.2H1007.2M417 447.2H1007.2M417 422.1H1007.2M417 397.7H1007.2M417 374.0H1007.2M417 351.1H1007.2M417 328.8H1007.2M417 307.2H1007.2M417 286.2H1007.2M417 265.8H1007.2M417 246.0H1007.2M417 226.7H1007.2M417 207.9H1007.2M417 189.7H1007.2M417 171.9H1007.2M417 154.5H1007.2M417 137.7H1007.2M417 121.2H1007.2M417 105.2H1007.2M398.0 94L276.5 578.8M418.0 94L304.2 578.8M438.0 94L331.9 578.8M458.0 94L359.6 578.8M478.0 94L387.2 578.8M497.9 94L414.9 578.8M517.9 94L442.6 578.8M537.9 94L470.2 578.8M557.9 94L497.9 578.8M577.9 94L525.6 578.8M597.8 94L553.3 578.8M617.8 94L580.9 578.8M637.8 94L608.6 578.8M657.8 94L636.3 578.8M677.8 94L664.0 578.8M697.7 94L691.6 578.8M717.7 94L719.3 578.8M737.7 94L747.0 578.8M757.7 94L774.6 578.8M777.7 94L802.3 578.8M797.6 94L830.0 578.8M817.6 94L857.7 578.8M837.6 94L885.3 578.8M857.6 94L913.0 578.8M877.6 94L940.7 578.8M897.5 94L968.4 578.8M917.5 94L996.0 578.8M937.5 94L1023.7 578.8M957.5 94L1051.4 578.8M977.4 94L1079.0 578.8M997.4 94L1106.7 578.8M1017.4 94L1134.4 578.8" stroke="#475352" stroke-width="1" fill="none"/>
<g id="map" shape-rendering="crispEdges">
<polygon points="835.6,123.5 837.2,123.5 837.4,165.0 836.6,225.0 834.5,250.0 832.5,262.0 833.5,279.0 812.0,287.0 790.5,276.0 796.0,258.0 801.0,241.0 806.0,216.0 812.0,192.0 816.0,180.0 822.0,165.0 826.6,155.0 830.0,144.0 833.5,130.0" fill="#828282" />
<polygon points="842.0,261.0 853.0,232.0 863.0,205.0 873.8,178.4 876.5,175.3 879.0,178.4 866.3,217.0 863.0,227.0 850.3,261.0 841.0,280.0 834.0,280.0" fill="#828282" />
<polygon points="709.0,268.0 716.5,267.5 742.8,272.3 769.0,275.8 789.0,277.8 812.0,281.0 812.0,290.0 780.0,288.8 745.0,287.6 708.5,286.8" fill="#828282" />
<polygon points="707.0,299.0 716.0,296.5 760.0,293.5 800.0,290.0 812.0,289.0 812.0,293.0 780.0,296.0 740.0,299.5 708.0,302.0" fill="#828282" />
<polygon points="716.0,309.0 740.0,304.0 770.0,298.5 800.0,293.0 812.0,291.0 812.0,295.0 780.0,300.5 745.0,307.0 718.0,312.0" fill="#828282" />
<polygon points="700.5,320.0 730.0,312.0 765.0,303.0 795.0,296.0 812.0,293.0 812.0,297.0 790.0,301.0 760.0,308.0 728.0,316.0 702.0,322.5" fill="#828282" />
<polygon points="810.0,296.0 824.0,300.0 815.0,312.0 800.0,330.0 786.0,346.0 775.0,358.0 768.5,363.0 770.0,352.0 774.0,338.0 777.0,326.0 779.0,317.0 792.0,307.0" fill="#828282" />
<polygon points="823.0,299.0 841.0,299.0 840.0,312.0 839.5,322.0 834.0,320.0 828.0,317.0 820.0,318.5 822.0,308.0" fill="#828282" />
<polygon points="845.0,282.5 866.0,283.0 880.0,281.0 895.0,279.0 897.0,280.5 903.0,286.0 908.5,289.0 906.0,290.5 888.0,288.5 866.0,288.3 845.0,288.0" fill="#828282" />
<polygon points="809.0,266.0 833.0,262.0 834.5,279.0 838.0,291.0 843.0,300.0 809.0,300.0" fill="#828282" />
</g>
<line x1="835.3" y1="129" x2="835.0" y2="166" stroke="#465251" stroke-width="1.0" stroke-linecap="round"/>
<line x1="833.2" y1="136" x2="832.6" y2="172" stroke="#465251" stroke-width="1.6" stroke-linecap="round"/>
<line x1="830.6" y1="147" x2="829.2" y2="186" stroke="#465251" stroke-width="1.8" stroke-linecap="round"/>
<line x1="827.6" y1="158" x2="825.8" y2="196" stroke="#465251" stroke-width="1.8" stroke-linecap="round"/>
<line x1="824.4" y1="168" x2="822" y2="204" stroke="#465251" stroke-width="1.6" stroke-linecap="round"/>
<line x1="821" y1="178" x2="818" y2="212" stroke="#465251" stroke-width="1.4" stroke-linecap="round"/>
<line x1="834.2" y1="172" x2="833.6" y2="214" stroke="#465251" stroke-width="1.0" stroke-linecap="round"/>
<line x1="831.5" y1="190" x2="830" y2="228" stroke="#465251" stroke-width="1.0" stroke-linecap="round"/>
<line x1="828" y1="200" x2="825.5" y2="240" stroke="#465251" stroke-width="1.0" stroke-linecap="round"/>
<line x1="820" y1="205" x2="815" y2="238" stroke="#465251" stroke-width="1.1" stroke-linecap="round"/>
<line x1="813" y1="225" x2="808" y2="255" stroke="#465251" stroke-width="1.1" stroke-linecap="round"/>
<line x1="824" y1="222" x2="820.5" y2="252" stroke="#465251" stroke-width="1.1" stroke-linecap="round"/>
<line x1="818" y1="245" x2="814" y2="268" stroke="#465251" stroke-width="1.1" stroke-linecap="round"/>
<line x1="805" y1="250" x2="801" y2="270" stroke="#465251" stroke-width="1.1" stroke-linecap="round"/>
<line x1="829" y1="236" x2="827" y2="262" stroke="#465251" stroke-width="1.0" stroke-linecap="round"/>
<line x1="722" y1="272.5" x2="745" y2="274.5" stroke="#555d5d" stroke-width="1.1" stroke-linecap="round"/>
<line x1="730" y1="277.5" x2="765" y2="280" stroke="#555d5d" stroke-width="1.1" stroke-linecap="round"/>
<line x1="720" y1="281.5" x2="742" y2="283" stroke="#555d5d" stroke-width="1.1" stroke-linecap="round"/>
<line x1="760" y1="284" x2="790" y2="285.5" stroke="#555d5d" stroke-width="1.1" stroke-linecap="round"/>
<line x1="775" y1="279.5" x2="800" y2="282" stroke="#555d5d" stroke-width="1.1" stroke-linecap="round"/>
<line x1="812.6" y1="188" x2="797" y2="261" stroke="#ee2417" stroke-width="3.8" stroke-linecap="round"/>
<line x1="796.5" y1="262" x2="792" y2="272.5" stroke="#ee2417" stroke-width="3.4" stroke-linecap="round"/>
<line x1="713.4" y1="260.5" x2="708.8" y2="283" stroke="#ee2417" stroke-width="3.8" stroke-linecap="round"/>
<line x1="706.7" y1="294" x2="704.6" y2="301" stroke="#ee2417" stroke-width="3.8" stroke-linecap="round"/>
<circle cx="834.5" cy="128.4" r="2.6" fill="#ee2417"/>
<circle cx="830" cy="146.2" r="2.6" fill="#ee2417"/>
<circle cx="826.6" cy="156.5" r="2.6" fill="#ee2417"/>
<circle cx="823.6" cy="166.6" r="2.6" fill="#ee2417"/>
<circle cx="820.6" cy="169.6" r="2.6" fill="#ee2417"/>
<circle cx="816" cy="181.7" r="2.6" fill="#ee2417"/>
<circle cx="819.5" cy="185.5" r="2.6" fill="#ee2417"/>
<circle cx="813.8" cy="188" r="2.6" fill="#ee2417"/>
<circle cx="834.5" cy="189.2" r="2.6" fill="#ee2417"/>
<circle cx="845.5" cy="101.5" r="2.6" fill="#ee2417"/>
<circle cx="877.9" cy="170.8" r="2.6" fill="#ee2417"/>
<circle cx="864" cy="212.8" r="2.6" fill="#ee2417"/>
<path d="M863.2 218 Q864.5 224.5 869.5 228.2" stroke="#ee2417" stroke-width="3.6" fill="none" stroke-linecap="round"/>
<rect x="829.8" y="132.5" width="2.4" height="2.4" fill="#151515"/>
<rect x="827.8" y="149.3" width="2.4" height="2.4" fill="#151515"/>
<rect x="821.8" y="157.6" width="2.4" height="2.4" fill="#151515"/>
<rect x="816.8" y="173.4" width="2.4" height="2.4" fill="#151515"/>
<rect x="874.5" y="175.2" width="2.4" height="2.4" fill="#151515"/>
<rect x="859.8" y="227.3" width="2.4" height="2.4" fill="#151515"/>
<rect x="787.3" y="276.3" width="2.4" height="2.4" fill="#151515"/>
<rect x="706.4" y="286.0" width="2.4" height="2.4" fill="#151515"/>
<rect x="715.7" y="308.8" width="2.4" height="2.4" fill="#151515"/>
<rect x="699.7" y="319.8" width="2.4" height="2.4" fill="#151515"/>
<rect x="771.6" y="325.1" width="2.4" height="2.4" fill="#151515"/>
<rect x="766.9" y="361.7" width="2.4" height="2.4" fill="#151515"/>
<rect x="894.1" y="278.6" width="2.4" height="2.4" fill="#151515"/>
<rect x="907.1" y="288.0" width="2.4" height="2.4" fill="#151515"/>
<rect x="838.3" y="289.3" width="2.4" height="2.4" fill="#151515"/>
<rect x="822.8" y="321.3" width="2.4" height="2.4" fill="#151515"/>
<rect x="834.8" y="323.8" width="2.4" height="2.4" fill="#151515"/>
<circle cx="716.9" cy="305.6" r="2.6" fill="#ee2417"/>
<circle cx="702.7" cy="312.2" r="2.6" fill="#ee2417"/>
<circle cx="696.7" cy="342.1" r="2.6" fill="#ee2417"/>
<circle cx="765.5" cy="449" r="2.6" fill="#ee2417"/>
<circle cx="778.9" cy="317.5" r="2.4" fill="#ee2417"/>
<circle cx="776.3" cy="321.9" r="2.4" fill="#ee2417"/>
<circle cx="781.6" cy="325.4" r="2.4" fill="#ee2417"/>
<circle cx="779.8" cy="329.8" r="2.4" fill="#ee2417"/>
<circle cx="778" cy="334.2" r="2.4" fill="#ee2417"/>
<circle cx="777.2" cy="338.6" r="2.4" fill="#ee2417"/>
<circle cx="776.3" cy="342.5" r="2.4" fill="#ee2417"/>
<circle cx="775.7" cy="348.3" r="2.4" fill="#ee2417"/>
<circle cx="771.9" cy="355.9" r="2.4" fill="#ee2417"/>
<circle cx="771.9" cy="360.5" r="2.4" fill="#ee2417"/>
<path d="M819.8 317.6 Q824 318.6 827.5 315.8 Q830.5 314.6 833 318 Q836 321.6 839 321.8" stroke="#ee2417" stroke-width="3.6" fill="none" stroke-linecap="round"/>
<circle cx="899.5" cy="276.1" r="2.6" fill="#ee2417"/>
<circle cx="906.6" cy="282.9" r="2.6" fill="#ee2417"/>
<circle cx="912.9" cy="284.6" r="2.6" fill="#ee2417"/>
<circle cx="813" cy="275.8" r="2.4" fill="#ee2417"/>
<circle cx="814.7" cy="289.2" r="2.4" fill="#ee2417"/>
<circle cx="821" cy="289.7" r="2.4" fill="#ee2417"/>
<rect x="827.3" y="279.6" width="10.2" height="9.8" fill="#e4e4e4"/>
<circle cx="840" cy="279.5" r="2.6" fill="#ee2417"/>
<circle cx="843.5" cy="281" r="2.6" fill="#ee2417"/>
<circle cx="841" cy="284.5" r="2.6" fill="#ee2417"/>
<circle cx="844.5" cy="285.5" r="2.6" fill="#ee2417"/>
<circle cx="842" cy="287.5" r="2.6" fill="#ee2417"/>
<rect x="810" y="263.7" width="56.2" height="34.4" rx="3.6" ry="3.6" fill="none" stroke="#f02419" stroke-width="3.7"/>
<polygon points="844.2,305.3 855.9,318.2 852.4,319.6 866.7,423.6 843.6,320.6 839.5,319.6" fill="#f02419"/>
<text x="828.5" y="451" font-family="Liberation Sans, sans-serif" font-size="33.5" fill="#f4b400">myAGV</text>
</svg></div>
</div></div>
<div class="abs" style="left:-2px;top:594.5px;width:1074px;height:4px;background:#06090b"></div>
</body>
</html>
